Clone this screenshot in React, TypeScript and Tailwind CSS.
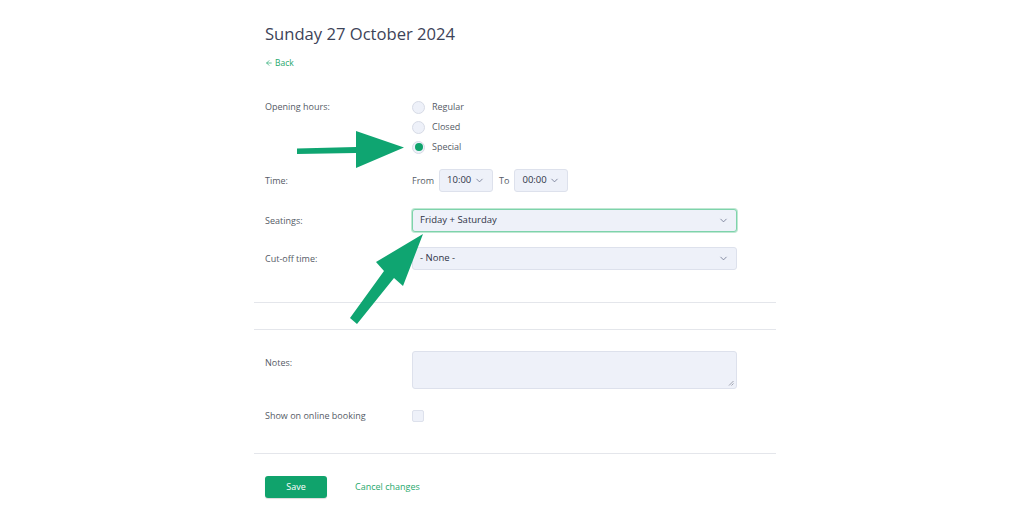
import { ChevronDown, ArrowLeft } from "lucide-react";

const radios = [
  { label: "Regular", checked: false },
  { label: "Closed", checked: false },
  { label: "Special", checked: true },
];

const Select = ({ value, className }: { value: string; className?: string }) => (
  <div
    className={`flex items-center justify-between rounded-[3px] border bg-[#eef1f9] text-[9.5px] text-[#2f3447] ${className ?? ""}`}
  >
    <span>{value}</span>
    <ChevronDown className="h-[11px] w-[11px] text-[#6f7690]" strokeWidth={1.8} />
  </div>
);

const Row = ({
  label,
  children,
  className,
  labelClass,
}: {
  label: string;
  children: React.ReactNode;
  className?: string;
  labelClass?: string;
}) => (
  <div className={`flex ${className ?? ""}`}>
    <div className={`w-[147px] shrink-0 text-[9px] text-[#555b66] ${labelClass ?? ""}`}>{label}</div>
    <div className="flex-1">{children}</div>
  </div>
);

export default function App() {
  return (
    <div className="relative min-h-[512px] w-full bg-white font-['Open_Sans',sans-serif]">
      <div className="mx-auto w-[522px] translate-x-[3px]">
        <div className="px-[11px] pt-[21px]">
          <h1 className="text-[16.6px] leading-[26px] text-[#3d4358]">Sunday 27 October 2024</h1>
          <a className="mt-[10px] flex items-center gap-[2px] text-[8.5px] leading-[12px] text-[#1fa86d]">
            <ArrowLeft className="h-[8px] w-[8px]" strokeWidth={2} />
            Back
          </a>

          <Row label="Opening hours:" className="mt-[32px] items-start" labelClass="-mt-[1px]">
            <div className="flex flex-col gap-[8px]">
              {radios.map((r) => (
                <div key={r.label} className="flex h-[12px] items-center gap-[7px]">
                  <span className="flex h-[13px] w-[13px] items-center justify-center rounded-full border border-[#d7dbe6] bg-[#eef1f9]">
                    {r.checked && <span className="h-[8px] w-[8px] rounded-full bg-[#10a36c]" />}
                  </span>
                  <span className="text-[9px] text-[#555b66]">{r.label}</span>
                </div>
              ))}
            </div>
          </Row>

          <Row label="Time:" className="mt-[16px] items-center">
            <div className="flex items-center text-[9px] text-[#555b66]">
              <span className="mr-[5px]">From</span>
              <Select value="10:00" className="h-[23px] w-[54px] border-[#dde1ec] px-[7px]" />
              <span className="ml-[6px] mr-[5px]">To</span>
              <Select value="00:00" className="h-[23px] w-[54px] border-[#dde1ec] px-[7px]" />
            </div>
          </Row>

          <Row label="Seatings:" className="mt-[17px] items-center">
            <Select value="Friday + Saturday" className="h-[23px] w-[325px] border-[#7ed3ab] px-[7px] shadow-[0_0_0_1px_#bfe8d3]" />
          </Row>

          <Row label="Cut-off time:" className="mt-[15px] items-center">
            <Select value="- None -" className="h-[23px] w-[325px] border-[#dde1ec] px-[7px]" />
          </Row>
        </div>

        <div className="mt-[32px] h-px bg-[#e4e6eb]" />
        <div className="mt-[26px] h-px bg-[#e4e6eb]" />

        <div className="px-[11px]">
          <Row label="Notes:" className="mt-[21px] items-start" labelClass="pt-[5px]">
            <div className="relative h-[38px] w-[325px] rounded-[3px] border border-[#dde1ec] bg-[#eef1f9]">
              <svg className="absolute bottom-[2px] right-[2px] h-[6px] w-[6px]" viewBox="0 0 6 6">
                <path d="M5.5 1 L1 5.5 M5.5 3.5 L3.5 5.5" stroke="#8a8f9c" strokeWidth="0.8" />
              </svg>
            </div>
          </Row>

          <Row label="Show on online booking" className="mt-[20px] items-center">
            <span className="block h-[12px] w-[12px] rounded-[2px] border border-[#dde1ec] bg-[#eef1f9]" />
          </Row>
        </div>

        <div className="mt-[30px] h-px bg-[#e4e6eb]" />

        <div className="flex items-center px-[11px] pt-[22px]">
          <button className="h-[22px] w-[62px] rounded-[3px] bg-[#10a36c] text-[9px] text-white shadow-[0_1px_1px_rgba(0,0,0,0.15)]">
            Save
          </button>
          <a className="ml-[28px] text-[9px] text-[#1fa86d]">Cancel changes</a>
        </div>
      </div>

      {/* annotation arrows */}
      <svg className="pointer-events-none absolute left-0 top-0 h-[512px] w-[1024px]" viewBox="0 0 1024 512">
        <path d="M297 148.5 L356 147 L356 131 L404 147.5 L356 168 L356 153 L297 154 Z" fill="#0fa571" />
        <path d="M350 318 L384 271 L376 262 L423 234 L403 286 L394 278 L357 324 Z" fill="#0fa571" />
      </svg>
    </div>
  );
}
